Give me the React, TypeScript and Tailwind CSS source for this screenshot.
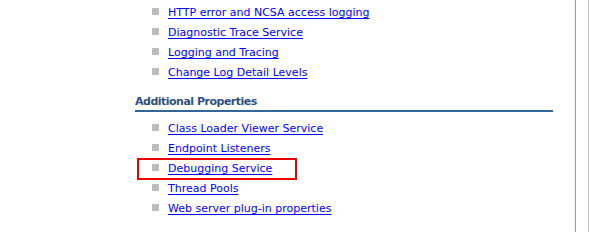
const general = [
  "HTTP error and NCSA access logging",
  "Diagnostic Trace Service",
  "Logging and Tracing",
  "Change Log Detail Levels",
];

const additional = [
  "Class Loader Viewer Service",
  "Endpoint Listeners",
  "Debugging Service",
  "Thread Pools",
  "Web server plug-in properties",
];

function LinkRow(props: { label: string; marked?: boolean }) {
  const { label, marked } = props;
  return (
    <li className="relative flex h-[20px] items-start pl-[17px]">
      <span className="mt-[5px] h-[7px] w-[7px] shrink-0 bg-[#bdbdbd]" />
      <a href="#" className="ml-[9px] text-[11px] leading-[20px] text-[#0000ff] underline underline-offset-[2px]">
        {label}
      </a>
      {marked && (
        <span className="absolute left-[2px] top-[-1px] h-[22px] w-[160px] border-2 border-[#ee0000]" />
      )}
    </li>
  );
}

export default function App() {
  return (
    <div className="flex h-[232px] w-[590px] overflow-hidden bg-white" style={{ fontFamily: '"DejaVu Sans", Verdana, sans-serif' }}>
      <div className="w-[135px] shrink-0" />
      <div className="w-[418px] shrink-0 pt-[3px]">
        <ul>
          {general.map((g) => (
            <LinkRow key={g} label={g} />
          ))}
        </ul>
        <h3 className="mt-[12px] border-b-2 border-[#336699] pb-[1px] text-[11px] font-bold leading-[14px] tracking-[-0.5px] text-[#2f4f7f]">
          Additional Properties
        </h3>
        <ul className="mt-[7px]">
          {additional.map((a) => (
            <LinkRow key={a} label={a} marked={a === "Debugging Service"} />
          ))}
        </ul>
      </div>
      <div className="w-[22px] shrink-0" />
      <div className="w-px shrink-0 bg-[#7f9ed6]" />
      <div className="w-[12px] shrink-0" />
      <div className="w-px shrink-0 bg-[#cccccc]" />
    </div>
  );
}
